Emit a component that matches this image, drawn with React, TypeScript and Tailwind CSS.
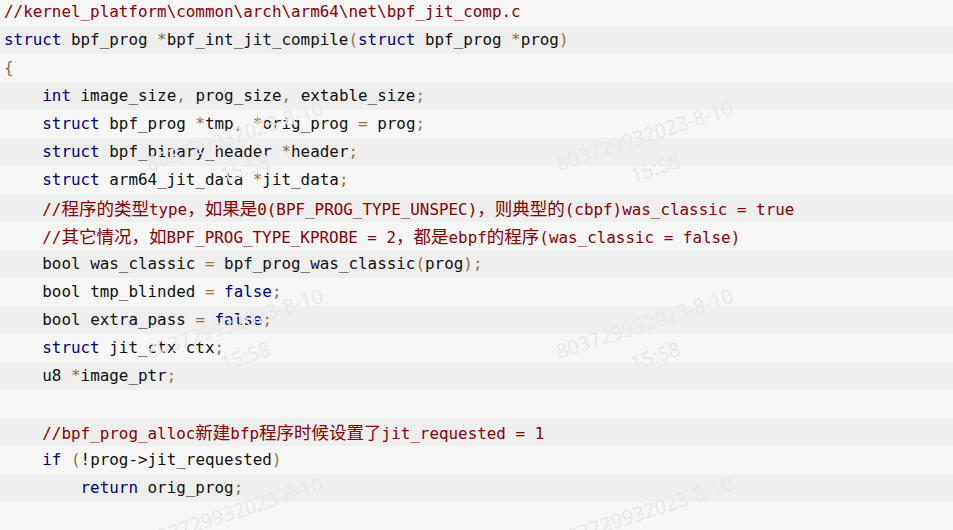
import React from 'react';

type Tok = [string, 'k' | 'p' | 'c' | 'n'];

const colors: { [key: string]: string } = {
  k: 'text-[#000080]',
  p: 'text-[#9a6e3a]',
  c: 'text-[#880000]',
  n: 'text-[#111111]',
};

const lines: Tok[][] = [
  [['//kernel_platform\\common\\arch\\arm64\\net\\bpf_jit_comp.c', 'c']],
  [['struct', 'k'], [' bpf_prog ', 'n'], ['*', 'p'], ['bpf_int_jit_compile', 'n'], ['(', 'p'], ['struct', 'k'], [' bpf_prog ', 'n'], ['*', 'p'], ['prog', 'n'], [')', 'p']],
  [['{', 'p']],
  [['    ', 'n'], ['int', 'k'], [' image_size', 'n'], [',', 'p'], [' prog_size', 'n'], [',', 'p'], [' extable_size', 'n'], [';', 'p']],
  [['    ', 'n'], ['struct', 'k'], [' bpf_prog ', 'n'], ['*', 'p'], ['tmp', 'n'], [',', 'p'], [' ', 'n'], ['*', 'p'], ['orig_prog ', 'n'], ['=', 'p'], [' prog', 'n'], [';', 'p']],
  [['    ', 'n'], ['struct', 'k'], [' bpf_binary_header ', 'n'], ['*', 'p'], ['header', 'n'], [';', 'p']],
  [['    ', 'n'], ['struct', 'k'], [' arm64_jit_data ', 'n'], ['*', 'p'], ['jit_data', 'n'], [';', 'p']],
  [['    ', 'n'], ['//程序的类型type，如果是0(BPF_PROG_TYPE_UNSPEC)，则典型的(cbpf)was_classic = true', 'c']],
  [['    ', 'n'], ['//其它情况，如BPF_PROG_TYPE_KPROBE = 2，都是ebpf的程序(was_classic = false)', 'c']],
  [['    ', 'n'], ['bool', 'n'], [' was_classic ', 'n'], ['=', 'p'], [' bpf_prog_was_classic', 'n'], ['(', 'p'], ['prog', 'n'], [')', 'p'], [';', 'p']],
  [['    ', 'n'], ['bool', 'n'], [' tmp_blinded ', 'n'], ['=', 'p'], [' ', 'n'], ['false', 'k'], [';', 'p']],
  [['    ', 'n'], ['bool', 'n'], [' extra_pass ', 'n'], ['=', 'p'], [' ', 'n'], ['false', 'k'], [';', 'p']],
  [['    ', 'n'], ['struct', 'k'], [' jit_ctx ctx', 'n'], [';', 'p']],
  [['    ', 'n'], ['u8 ', 'n'], ['*', 'p'], ['image_ptr', 'n'], [';', 'p']],
  [],
  [['    ', 'n'], ['//bpf_prog_alloc新建bfp程序时候设置了jit_requested = 1', 'c']],
  [['    ', 'n'], ['if', 'k'], [' ', 'n'], ['(', 'p'], ['!prog->jit_requested', 'n'], [')', 'p']],
  [['        ', 'n'], ['return', 'k'], [' orig_prog', 'n'], [';', 'p']],
  [],
];

function Segment({ text, kind }: { text: string; kind: string }) {
  const parts = text.split(/([\u3000-\u9fff\uff00-\uffef]+)/);
  return (
    <span className={colors[kind]}>
      {parts.map((part, i) =>
        /[\u3000-\u9fff\uff00-\uffef]/.test(part) ? (
          <span key={i} className="text-[17.5px] font-['Noto_Sans_CJK_SC',sans-serif]">
            {part}
          </span>
        ) : (
          <span key={i}>{part}</span>
        )
      )}
    </span>
  );
}

// faint rotated watermark laid over the code
function Watermark({ pos }: { pos: string }) {
  return (
    <div
      className={`pointer-events-none absolute ${pos} -translate-x-1/2 -translate-y-1/2 -rotate-[18deg] text-center font-['Open_Sans',sans-serif] text-[20px] leading-[34px] text-[#e7e7e7] whitespace-nowrap`}
    >
      <div>803729932023-8-10</div>
      <div>15:58</div>
    </div>
  );
}

export default function App() {
  return (
    <div className="relative h-[530px] w-[953px] overflow-hidden bg-[#f6f6f6]">
      <div className="-mt-[2px] flex flex-col font-['DejaVu_Sans_Mono',monospace] text-[15.9px]">
        {lines.map((line, i) => (
          <div
            key={i}
            className={`flex h-[28px] items-center whitespace-pre pl-[4px] ${i % 2 === 1 ? 'bg-[#eeeeee]' : ''}`}
          >
            {line.map(([text, kind], j) => (
              <Segment key={j} text={text} kind={kind} />
            ))}
          </div>
        ))}
      </div>
      <Watermark pos="left-[240px] top-[152px]" />
      <Watermark pos="left-[650px] top-[152px]" />
      <Watermark pos="left-[240px] top-[340px]" />
      <Watermark pos="left-[650px] top-[340px]" />
      <Watermark pos="left-[240px] top-[528px]" />
      <Watermark pos="left-[650px] top-[528px]" />
    </div>
  );
}
